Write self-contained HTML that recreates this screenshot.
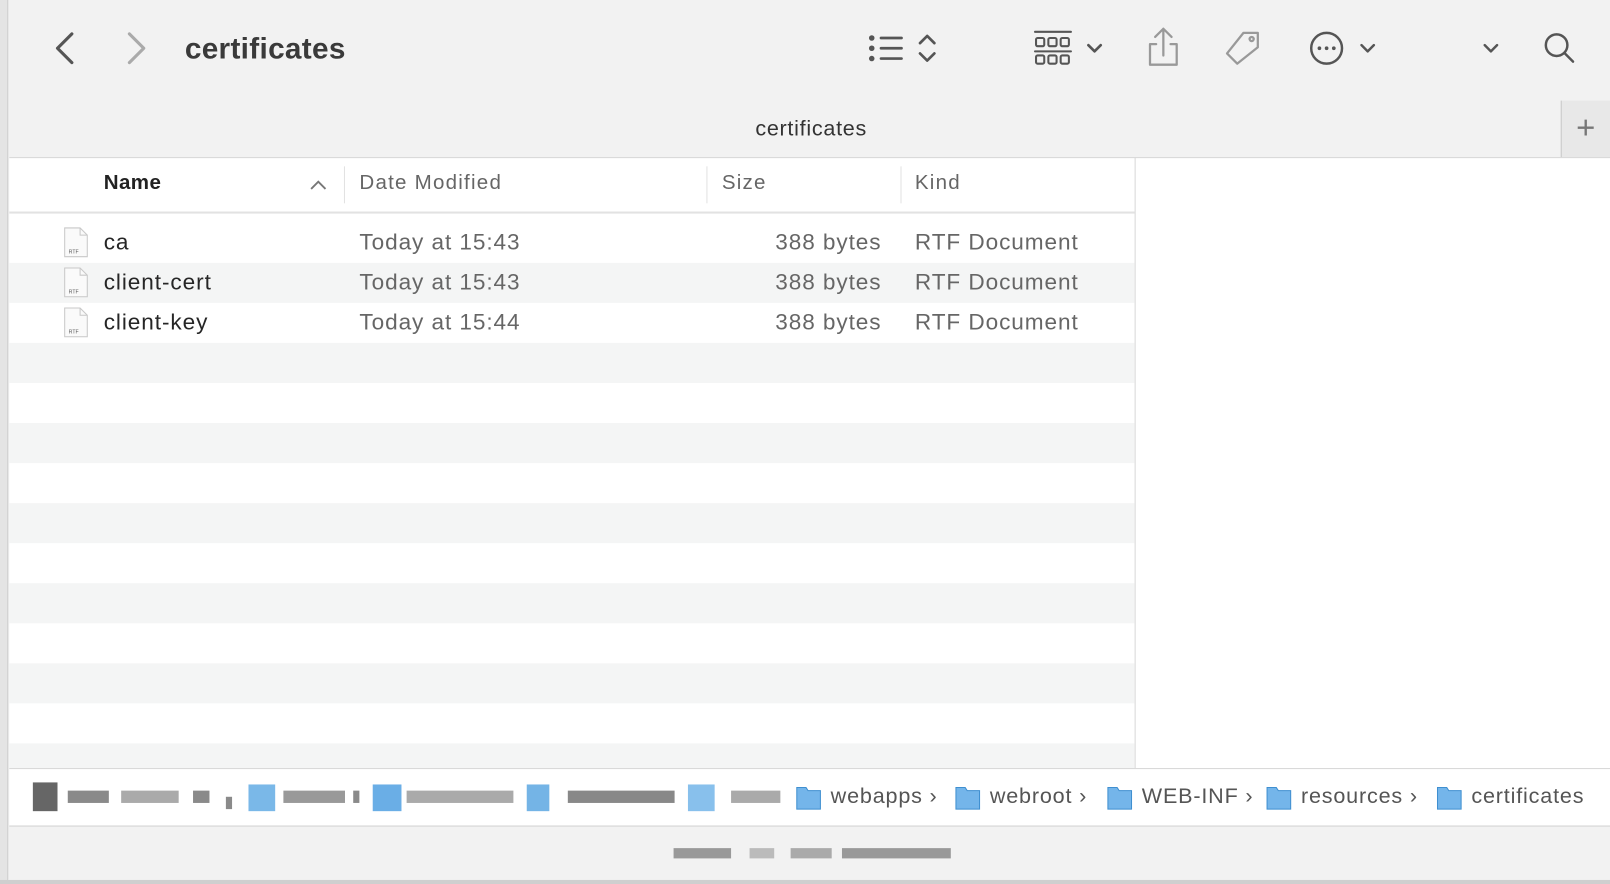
<!DOCTYPE html>
<html><head><meta charset="utf-8"><style>
*{margin:0;padding:0;box-sizing:border-box}
html,body{width:1610px;height:884px;overflow:hidden;background:#f2f2f2}
#w{position:absolute;left:0;top:0;width:1568px;height:861px;transform:scale(1.02679);transform-origin:0 0;font-family:"Liberation Sans",Helvetica,Arial,sans-serif;color:#262626}
.a{position:absolute}
.t{position:absolute;white-space:nowrap}
svg{position:absolute;overflow:visible}
.row{position:absolute;left:9px;width:1096px;height:39px}
.g{background:#f4f5f5}
.cell{position:absolute;top:6px;font-size:22px;white-space:nowrap;letter-spacing:0.9px}
.px{position:absolute;height:12px;background:#8a8a8a}
.bc{position:absolute;top:764px;font-size:21px;color:#555;white-space:nowrap;letter-spacing:0.8px}
.h{position:absolute;top:167px;font-size:20px;color:#666;white-space:nowrap;letter-spacing:1.2px}
</style></head><body><div id="w">
<div class="a" style="left:0;top:0;width:8px;height:861px;background:#e4e4e4;border-right:1px solid #cfcfcf"></div>
<svg width="1568" height="97" style="left:0;top:0" fill="none" stroke-linecap="round" stroke-linejoin="round">
<path d="M70 33 L56 47 L70 61" stroke="#555" stroke-width="3"/>
<path d="M126 33 L140 47 L126 61" stroke="#aaa" stroke-width="3"/>
<g stroke="#555" stroke-width="2.6"><path d="M858 37h20M858 47h20M858 57h20"/><circle cx="849" cy="37" r="1.4" fill="#555"/><circle cx="849" cy="47" r="1.4" fill="#555"/><circle cx="849" cy="57" r="1.4" fill="#555"/>
<path d="M896 42l7-7 7 7M896 52l7 7 7-7"/></g>
<g stroke="#555" stroke-width="2"><path d="M1008 31h35"/><rect x="1009" y="37" width="8" height="8" rx="1.5"/><rect x="1021" y="37" width="8" height="8" rx="1.5"/><rect x="1033" y="37" width="8" height="8" rx="1.5"/><path d="M1008 50h35"/><rect x="1009" y="54" width="8" height="8" rx="1.5"/><rect x="1021" y="54" width="8" height="8" rx="1.5"/><rect x="1033" y="54" width="8" height="8" rx="1.5"/>
<path d="M1060 44l6 6 6-6" stroke-width="2.6"/></g>
<g stroke="#999" stroke-width="2.2"><path d="M1133 28v26M1125 36l8-8 8 8"/><path d="M1126 43h-6v20h26v-20h-6"/>
<path d="M1195 52l16-20 14 0 0 14-20 16 z"/><circle cx="1219" cy="38" r="2"/></g>
<g stroke="#555" stroke-width="2.4"><circle cx="1292" cy="47" r="15"/><path d="M1326 44l6 6 6-6M1446 44l6 6 6-6"/>
<circle cx="1516" cy="44" r="10.5"/><path d="M1524 52l8 8"/></g>
<circle cx="1285" cy="47" r="1.8" fill="#555"/><circle cx="1292" cy="47" r="1.8" fill="#555"/><circle cx="1299" cy="47" r="1.8" fill="#555"/>
</svg>
<div class="t" style="left:180px;top:32px;font-size:29px;font-weight:bold;color:#3a3a3a;letter-spacing:0.3px">certificates</div>
<div class="t" style="left:0;width:1580px;top:114px;text-align:center;font-size:21px;color:#333;letter-spacing:0.7px">certificates</div>
<div class="a" style="left:1520px;top:98px;width:48px;height:56px;background:#e8e8e8;border-left:1px solid #c8c8c8"></div>
<div class="t" style="left:1535px;top:106px;font-size:32px;color:#777;font-weight:300">+</div>
<div class="a" style="left:9px;top:153px;width:1559px;height:595px;background:#fff;border-top:1px solid #d6d6d6"></div>
<div class="a" style="left:1105px;top:153px;width:1px;height:595px;background:#d8d8d8"></div>
<div class="a" style="left:9px;top:206px;width:1096px;height:2px;background:#e2e2e2"></div>
<div class="a" style="left:335px;top:162px;width:1px;height:36px;background:#e2e2e2"></div>
<div class="a" style="left:688px;top:162px;width:1px;height:36px;background:#e2e2e2"></div>
<div class="a" style="left:877px;top:162px;width:1px;height:36px;background:#e2e2e2"></div>
<div class="t" style="left:101px;top:167px;font-size:20px;font-weight:bold;color:#222;letter-spacing:0.4px">Name</div>
<svg width="20" height="20" style="left:300px;top:170px"><path d="M3 14l7-7 7 7" stroke="#777" stroke-width="1.8" fill="none"/></svg>
<div class="h" style="left:350px">Date Modified</div>
<div class="h" style="left:703px">Size</div>
<div class="h" style="left:891px">Kind</div>
<div class="row g" style="top:256px"></div>
<div class="row g" style="top:334px"></div>
<div class="row g" style="top:412px"></div>
<div class="row g" style="top:490px"></div>
<div class="row g" style="top:568px"></div>
<div class="row g" style="top:646px"></div>
<div class="row g" style="top:724px;height:24px"></div>
<div class="row" style="top:217px">
<svg width="24" height="30" style="left:53px;top:4px"><path d="M1 1h15l7 7v21H1z" fill="#fafafa" stroke="#c8c8c8"/><path d="M16 1v7h7" fill="none" stroke="#c8c8c8"/><text x="5" y="26" font-size="5" fill="#555" font-family="Liberation Sans">RTF</text></svg>
<div class="cell" style="left:92px">ca</div><div class="cell" style="left:341px;color:#666">Today at 15:43</div><div class="cell" style="left:746px;color:#666">388 bytes</div><div class="cell" style="left:882px;color:#666">RTF Document</div></div>
<div class="row" style="top:256px">
<svg width="24" height="30" style="left:53px;top:4px"><path d="M1 1h15l7 7v21H1z" fill="#fafafa" stroke="#c8c8c8"/><path d="M16 1v7h7" fill="none" stroke="#c8c8c8"/><text x="5" y="26" font-size="5" fill="#555" font-family="Liberation Sans">RTF</text></svg>
<div class="cell" style="left:92px">client-cert</div><div class="cell" style="left:341px;color:#666">Today at 15:43</div><div class="cell" style="left:746px;color:#666">388 bytes</div><div class="cell" style="left:882px;color:#666">RTF Document</div></div>
<div class="row" style="top:295px">
<svg width="24" height="30" style="left:53px;top:4px"><path d="M1 1h15l7 7v21H1z" fill="#fafafa" stroke="#c8c8c8"/><path d="M16 1v7h7" fill="none" stroke="#c8c8c8"/><text x="5" y="26" font-size="5" fill="#555" font-family="Liberation Sans">RTF</text></svg>
<div class="cell" style="left:92px">client-key</div><div class="cell" style="left:341px;color:#666">Today at 15:44</div><div class="cell" style="left:746px;color:#666">388 bytes</div><div class="cell" style="left:882px;color:#666">RTF Document</div></div>
<div class="a" style="left:9px;top:748px;width:1559px;height:57px;background:#fff;border-top:1px solid #d8d8d8;border-bottom:1px solid #d0d0d0"></div>
<div class="a" style="left:32px;top:762px;width:24px;height:28px;background:#666"></div>
<div class="px" style="left:66px;top:770px;width:40px"></div><div class="px" style="left:118px;top:770px;width:56px;background:#aaa"></div><div class="px" style="left:188px;top:770px;width:16px"></div><div class="px" style="left:220px;top:776px;width:6px"></div>
<div class="a" style="left:242px;top:764px;width:26px;height:26px;background:#7ab8e8"></div><div class="px" style="left:276px;top:770px;width:60px;background:#999"></div><div class="px" style="left:344px;top:770px;width:6px"></div>
<div class="a" style="left:363px;top:764px;width:28px;height:26px;background:#6aaee6"></div><div class="px" style="left:396px;top:770px;width:104px;background:#aaa"></div>
<div class="a" style="left:513px;top:764px;width:22px;height:26px;background:#74b4e6"></div><div class="px" style="left:553px;top:770px;width:104px;background:#888"></div>
<div class="a" style="left:670px;top:764px;width:26px;height:26px;background:#88c0ec"></div><div class="px" style="left:712px;top:770px;width:48px;background:#aaa"></div>
<svg width="800" height="30" style="left:770px;top:762px">
<g fill="#74b5ea" stroke="#3f8fd0" stroke-width="1"><path d="M6 5h9l2 3h12v18H6z"/><path d="M161 5h9l2 3h12v18H161z"/><path d="M309 5h9l2 3h12v18H309z"/><path d="M464 5h9l2 3h12v18H464z"/><path d="M630 5h9l2 3h12v18H630z"/></g>
</svg>
<div class="bc" style="left:809px">webapps ›</div>
<div class="bc" style="left:964px">webroot ›</div>
<div class="bc" style="left:1112px">WEB-INF ›</div>
<div class="bc" style="left:1267px">resources ›</div>
<div class="bc" style="left:1433px">certificates</div>
<div class="px" style="left:656px;top:826px;width:56px;height:10px;background:#999"></div><div class="px" style="left:730px;top:826px;width:24px;height:10px;background:#bbb"></div><div class="px" style="left:770px;top:826px;width:40px;height:10px;background:#aaa"></div><div class="px" style="left:820px;top:826px;width:106px;height:10px;background:#999"></div>
<div class="a" style="left:0;top:857px;width:1568px;height:4px;background:#cfcfcf"></div>
</div></body></html>
